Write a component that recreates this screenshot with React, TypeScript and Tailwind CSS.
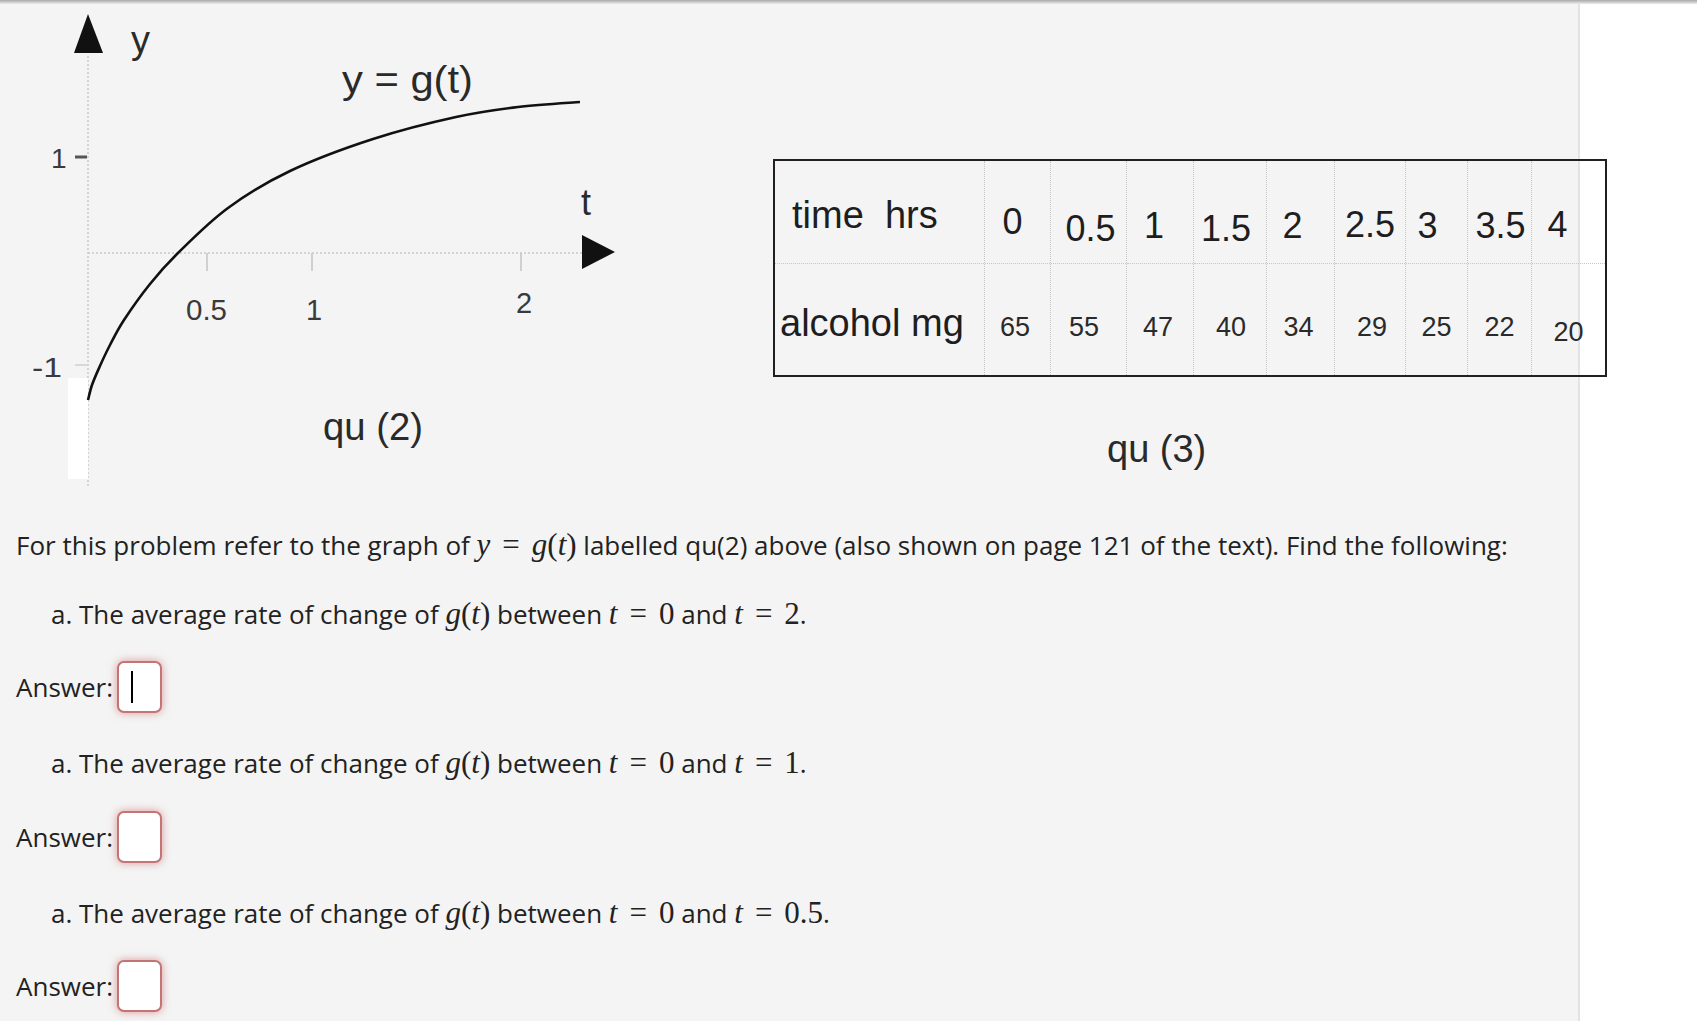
import React from "react";

type Pt = [number, number];

// catmull-rom through traced points -> cubic path
function smoothPath(pts: Pt[]) {
  let d = `M${pts[0][0]},${pts[0][1]}`;
  for (let i = 0; i < pts.length - 1; i++) {
    const p0 = pts[i - 1] || pts[i];
    const p1 = pts[i];
    const p2 = pts[i + 1];
    const p3 = pts[i + 2] || p2;
    const c1x = p1[0] + (p2[0] - p0[0]) / 6;
    const c1y = p1[1] + (p2[1] - p0[1]) / 6;
    const c2x = p2[0] - (p3[0] - p1[0]) / 6;
    const c2y = p2[1] - (p3[1] - p1[1]) / 6;
    d += ` C${c1x.toFixed(1)},${c1y.toFixed(1)} ${c2x.toFixed(1)},${c2y.toFixed(1)} ${p2[0]},${p2[1]}`;
  }
  return d;
}

const curve: Pt[] = [
  [88, 400],
  [92, 385],
  [99.5, 367],
  [110, 345],
  [124, 320],
  [150, 284],
  [178, 253],
  [228, 208],
  [290, 171],
  [373, 139],
  [456, 117],
  [518, 107],
  [580, 102],
];

function Graph() {
  return (
    <svg width={640} height={526} viewBox="0 4 640 526" className="shrink-0" fontFamily="'Liberation Sans', Arial, sans-serif">
      <line x1={88} y1={56} x2={88} y2={486} stroke="#c9c9c9" strokeWidth={1.5} strokeDasharray="2 2" />
      <line x1={88} y1={253} x2={584} y2={253} stroke="#c9c9c9" strokeWidth={1.5} strokeDasharray="2 2" />
      <rect x={68} y={378} width={20} height={101} fill="#ffffff" />
      <polygon points="88,14 74,53 103,53" fill="#111" />
      <polygon points="582,235 615,252 582,269" fill="#111" />
      {[207, 312, 521].map((x) => (
        <line key={x} x1={x} y1={253} x2={x} y2={271} stroke="#c4c4c4" strokeWidth={1.5} />
      ))}
      <line x1={75} y1={157} x2={87} y2={157} stroke="#555" strokeWidth={3} />
      <line x1={75} y1={365} x2={87} y2={365} stroke="#cfcfcf" strokeWidth={1.5} />
      <path d={smoothPath(curve)} fill="none" stroke="#111" strokeWidth={2.6} />
      <text x={131} y={53} fontSize={38} fill="#2a2a2a">y</text>
      <text x={342} y={93} fontSize={38} fill="#2a2a2a" textLength={131} lengthAdjust="spacingAndGlyphs">
        y = g(t)
      </text>
      <text x={581} y={215} fontSize={36} fill="#2a2a2a">t</text>
      <text x={51} y={168} fontSize={28} fill="#3a3a3a">1</text>
      <text x={32} y={377} fontSize={28} fill="#3a3a3a" textLength={30} lengthAdjust="spacingAndGlyphs">-1</text>
      <text x={186} y={320} fontSize={29} fill="#3a3a3a" textLength={41} lengthAdjust="spacingAndGlyphs">0.5</text>
      <text x={306} y={320} fontSize={29} fill="#3a3a3a">1</text>
      <text x={516} y={313} fontSize={29} fill="#3a3a3a">2</text>
      <text x={323} y={440} fontSize={38} fill="#2a2a2a" textLength={100} lengthAdjust="spacingAndGlyphs">
        qu (2)
      </text>
    </svg>
  );
}

const cols = [
  { w: "w-[66px]", t: "0", tc: "pt-[43px] pr-[10px]", a: "65", ac: "pt-[50px] pr-[5px]" },
  { w: "w-[76px]", t: "0.5", tc: "pt-[50px] pl-[4px]", a: "55", ac: "pt-[50px] pr-[9px]" },
  { w: "w-[67px]", t: "1", tc: "pt-[47px] pr-[12px]", a: "47", ac: "pt-[50px] pr-[4px]" },
  { w: "w-[73px]", t: "1.5", tc: "pt-[50px] pr-[8px]", a: "40", ac: "pt-[50px] pl-[2px]" },
  { w: "w-[68px]", t: "2", tc: "pt-[47px] pr-[16px]", a: "34", ac: "pt-[50px] pr-[4px]" },
  { w: "w-[71px]", t: "2.5", tc: "pt-[46px]", a: "29", ac: "pt-[50px] pl-[4px]" },
  { w: "w-[62px]", t: "3", tc: "pt-[47px] pr-[18px]", a: "25", ac: "pt-[50px]" },
  { w: "w-[64px]", t: "3.5", tc: "pt-[47px] pl-[2px]", a: "22", ac: "pt-[50px]" },
  { w: "w-[73px]", t: "4", tc: "pt-[46px] pr-[22px]", a: "20", ac: "pt-[55px]" },
];

function DataTable() {
  return (
    <div className="flex flex-col font-['Liberation_Sans',Arial,sans-serif] text-[#1e1e1e]">
      <div className="flex w-[834px] border-2 border-[#231f20]">
        <div className="flex w-[210px] flex-col border-r border-dotted border-[#c6c6c6]">
          <div className="h-[103px] whitespace-pre border-b border-dotted border-[#c6c6c6] pl-[17px] pt-[35px] text-[38px] leading-[38px]">
            time  hrs
          </div>
          <div className="h-[111px] pl-[5px] pt-[40px] text-[38px] leading-[38px]">alcohol mg</div>
        </div>
        {cols.map((c, i) => (
          <div
            key={c.t}
            className={`flex flex-col ${c.w} ${i < cols.length - 1 ? "border-r border-dotted border-[#c6c6c6]" : ""}`}
          >
            <div className={`flex h-[103px] justify-center border-b border-dotted border-[#c6c6c6] text-[36px] leading-[36px] ${c.tc}`}>
              {c.t}
            </div>
            <div className={`flex h-[111px] justify-center text-[27px] leading-[27px] text-[#2a2a2a] ${c.ac}`}>{c.a}</div>
          </div>
        ))}
      </div>
      <div className="mt-[53px] pl-[334px] text-[38px] leading-[38px] text-[#2a2a2a]">qu (3)</div>
    </div>
  );
}

const V = ({ c }: { c: string }) => (
  <span className="font-['Liberation_Serif',serif] text-[31px] italic">{c}</span>
);
const R = ({ c, eq }: { c: string; eq?: boolean }) => (
  <span className={`font-['Liberation_Serif',serif] text-[31px] ${eq ? "mx-[12px]" : ""}`}>{c}</span>
);

const Gt = () => (
  <>
    <V c="g" />
    <R c="(" />
    <V c="t" />
    <R c=")" />
  </>
);

function Question({ end }: { end: string }) {
  return (
    <p className="pl-[35px]">
      a. The average rate of change of <Gt /> between <V c="t" />
      <R c="=" eq />
      <R c="0" /> and <V c="t" />
      <R c="=" eq />
      <R c={end} />.
    </p>
  );
}

function AnswerRow({ focused }: { focused?: boolean }) {
  return (
    <div className="flex items-center">
      <span>Answer:</span>
      <div className="ml-[4px] flex h-[52px] w-[45px] items-center rounded-[7px] border-2 border-[#c47474] bg-white shadow-[0_0_8px_rgba(196,80,80,0.55)]">
        {focused && <span className="ml-[12px] h-[32px] w-[2px] bg-black" />}
      </div>
    </div>
  );
}

export default function App() {
  return (
    <div className="min-h-screen bg-white font-['Open_Sans',sans-serif] text-[#222]">
      <div className="h-[4px] bg-linear-to-b from-[#a9a9a9] to-[#ececec]" />
      <div className="min-h-[1017px] w-[1580px] border-r-2 border-[#e3e3e3] bg-[#f4f4f4]">
        <div className="flex h-[526px]">
          <Graph />
          <div className="ml-[133px] mt-[155px]">
            <DataTable />
          </div>
        </div>
        <div className="pl-[16px] text-[26px] leading-[30px]">
          <p>
            For this problem refer to the graph of <V c="y" />
            <R c="=" eq />
            <Gt /> labelled qu(2) above (also shown on page 121 of the text). Find the following:
          </p>
          <div className="mt-[39px]">
            <Question end="2" />
          </div>
          <div className="mt-[32px]">
            <AnswerRow focused />
          </div>
          <div className="mt-[35px]">
            <Question end="1" />
          </div>
          <div className="mt-[33px]">
            <AnswerRow />
          </div>
          <div className="mt-[35px]">
            <Question end="0.5" />
          </div>
          <div className="mt-[32px]">
            <AnswerRow />
          </div>
        </div>
      </div>
    </div>
  );
}
